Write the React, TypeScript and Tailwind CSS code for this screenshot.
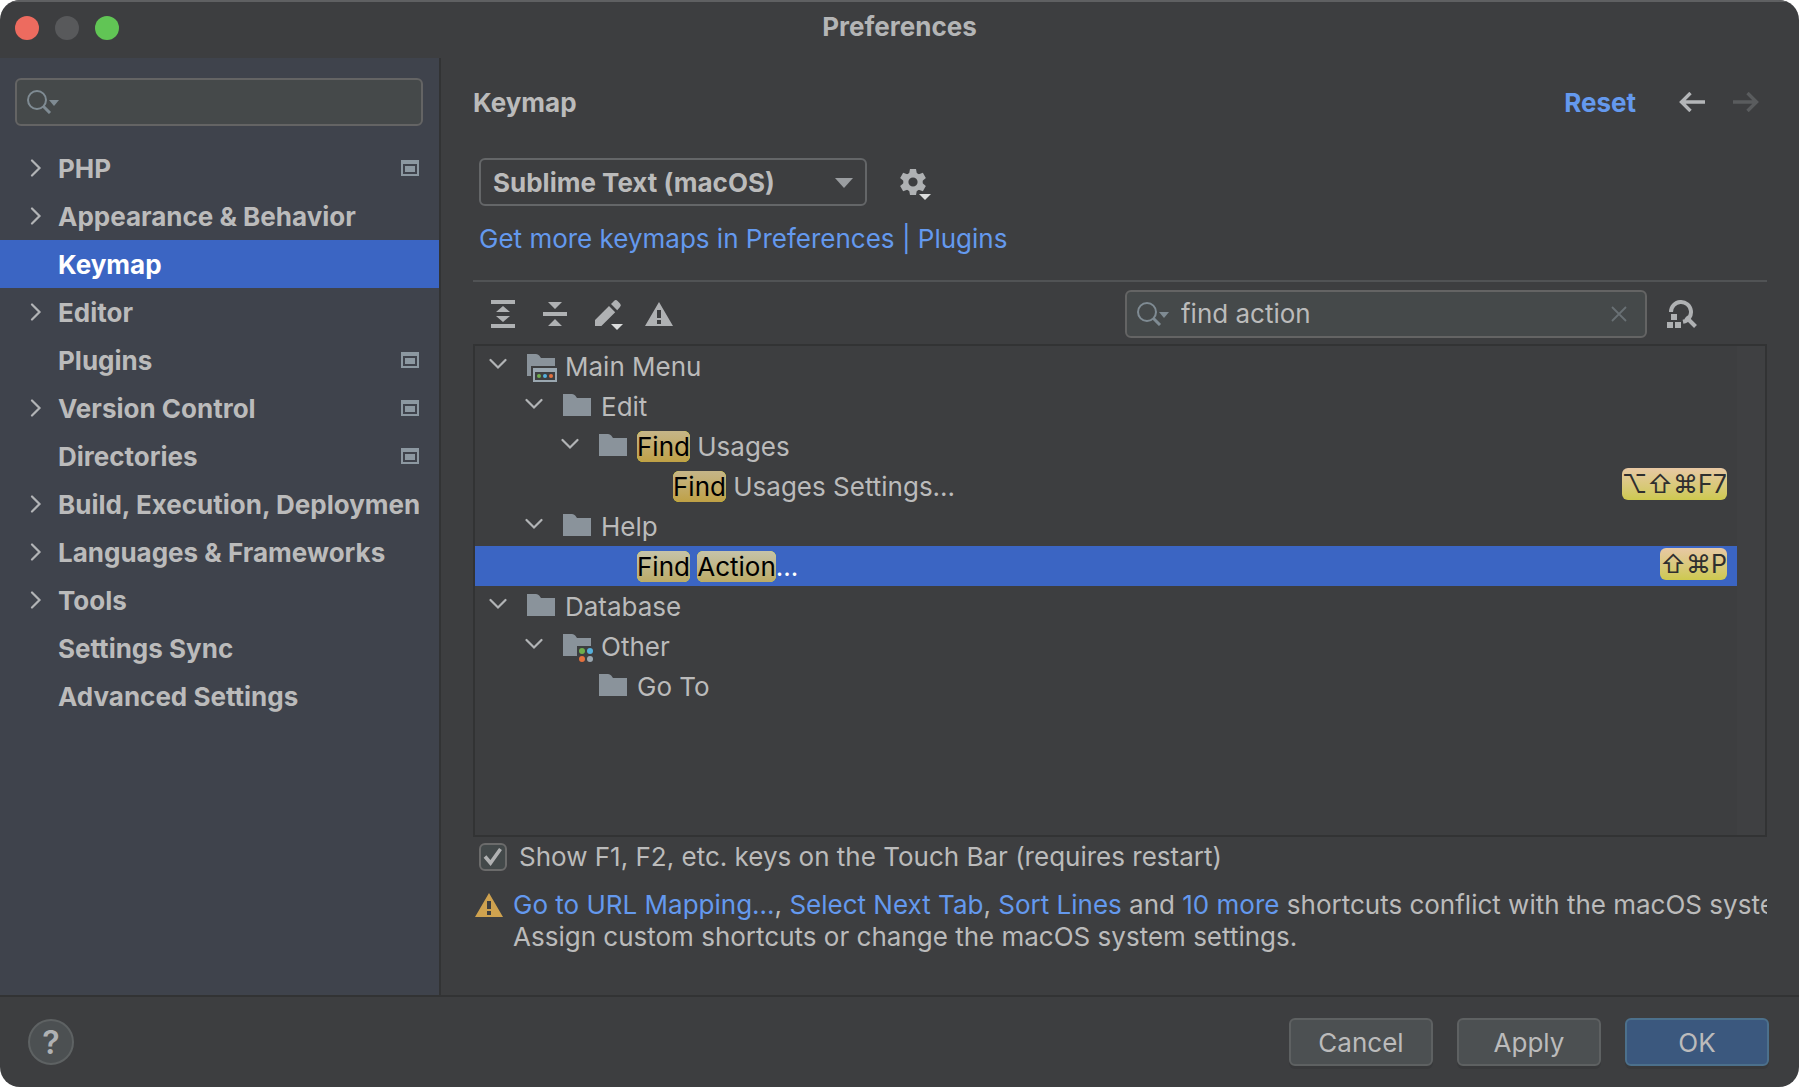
import React, { useState } from "react";
import clsx from "clsx";

type SidebarItem = {
  name: string;
  expandable?: boolean;
  projectLevel?: boolean;
};

type FolderKind = "folder" | "menu" | "group";

type TreeRow = {
  id: string;
  level: number;
  open?: boolean;
  folder?: FolderKind;
  parts: { text: string; match?: boolean }[];
  shortcut?: string;
};

const SIDEBAR_ITEMS: SidebarItem[] = [
  { name: "PHP", expandable: true, projectLevel: true },
  { name: "Appearance & Behavior", expandable: true },
  { name: "Keymap" },
  { name: "Editor", expandable: true },
  { name: "Plugins", projectLevel: true },
  { name: "Version Control", expandable: true, projectLevel: true },
  { name: "Directories", projectLevel: true },
  { name: "Build, Execution, Deployment", expandable: true },
  { name: "Languages & Frameworks", expandable: true },
  { name: "Tools", expandable: true },
  { name: "Settings Sync" },
  { name: "Advanced Settings" },
];

const TREE_ROWS: TreeRow[] = [
  { id: "main-menu", level: 0, open: true, folder: "menu", parts: [{ text: "Main Menu" }] },
  { id: "edit", level: 1, open: true, folder: "folder", parts: [{ text: "Edit" }] },
  {
    id: "find-usages",
    level: 2,
    open: true,
    folder: "folder",
    parts: [{ text: "Find", match: true }, { text: " Usages" }],
  },
  {
    id: "find-usages-settings",
    level: 3,
    parts: [{ text: "Find", match: true }, { text: " Usages Settings..." }],
    shortcut: "⌥⇧⌘F7",
  },
  { id: "help", level: 1, open: true, folder: "folder", parts: [{ text: "Help" }] },
  {
    id: "find-action",
    level: 2,
    parts: [
      { text: "Find", match: true },
      { text: " " },
      { text: "Action", match: true },
      { text: "..." },
    ],
    shortcut: "⇧⌘P",
  },
  { id: "database", level: 0, open: true, folder: "folder", parts: [{ text: "Database" }] },
  { id: "other", level: 1, open: true, folder: "group", parts: [{ text: "Other" }] },
  { id: "go-to", level: 2, folder: "folder", parts: [{ text: "Go To" }] },
];

const INDENT = ["pl-[14px]", "pl-[50px]", "pl-[86px]", "pl-[122px]"];

const SearchIcon = () => (
  <svg width="32" height="24" viewBox="0 0 32 24" fill="none" aria-hidden="true">
    <circle cx="10" cy="10" r="9" stroke="#7f8b93" strokeWidth="2" />
    <path d="M16.5 16.5 23 23" stroke="#7f8b93" strokeWidth="3" />
    <path d="M22 10h10l-5 6z" fill="#7f8b93" />
  </svg>
);

const ChevronRight = () => (
  <svg width="12" height="18" viewBox="0 0 12 18" fill="none" aria-hidden="true">
    <path
      d="m2 1.5 7.5 7.5L2 16.5"
      stroke="#b2b4b6"
      strokeWidth="2.2"
      strokeLinecap="round"
    />
  </svg>
);

const ChevronDown = () => (
  <svg width="18" height="12" viewBox="0 0 18 12" fill="none" aria-hidden="true">
    <path
      d="m1.5 2 7.5 7.5L16.5 2"
      stroke="#b2b4b6"
      strokeWidth="2.2"
      strokeLinecap="round"
    />
  </svg>
);

const ProjectIcon = () => (
  <svg width="18" height="16" viewBox="0 0 18 16" fill="#8c98a1" aria-hidden="true">
    <path fillRule="evenodd" d="M0 0h18v16H0zM2 4v10h14V4z" />
    <path d="M4 6h10v6H4z" />
  </svg>
);

const FolderIcon = ({ kind }: { kind: FolderKind }) => (
  <svg width="30" height="28" viewBox="0 0 30 28" fill="#8a939b" aria-hidden="true">
    {kind === "folder" && <path d="M0 0h9q2 0 3.2 1.6L14 4h14v18H0z" />}
    {kind === "menu" && (
      <>
        <path d="M0 0h9q2 0 3.2 1.6L14 4h14v8H4v10H0z" />
        <path fillRule="evenodd" fill="#9aa7b0" d="M6 14h24v14H6zM8 18v8h20v-8z" />
        <circle cx="12" cy="22" r="2" fill="#6fae4c" />
        <circle cx="18" cy="22" r="2" fill="#55b0dc" />
        <circle cx="24" cy="22" r="2" fill="#e4703d" />
      </>
    )}
    {kind === "group" && (
      <>
        <path d="M0 0h9q2 0 3.2 1.6L14 4h14v8H14v10H0z" />
        <circle cx="19" cy="17" r="3" fill="#6fae4c" />
        <circle cx="27" cy="17" r="3" fill="#55b0dc" />
        <circle cx="19" cy="25" r="3" fill="#e4703d" />
        <circle cx="27" cy="25" r="3" fill="#9aa7b0" />
      </>
    )}
  </svg>
);

const GearIcon = () => (
  <svg width="32" height="32" viewBox="0 0 32 32" aria-hidden="true">
    <g fill="#afb1b3">
      <path
        fillRule="evenodd"
        d="M14 4.200a9.800 9.800 0 1 1 0 19.600 9.800 9.800 0 0 1 0-19.600zm0 5.200a4.600 4.600 0 1 0 0 9.200 4.600 4.600 0 0 0 0-9.200z"
      />
      {[0, 60, 120, 180, 240, 300].map(angle => (
        <path
          key={angle}
          d="M11 .9h6l1 5.600h-8z"
          transform={`rotate(${angle} 14 14)`}
        />
      ))}
    </g>
    <path d="M20 26h12l-6 6z" fill="#dcdddd" />
  </svg>
);

const ExpandAllIcon = () => (
  <svg width="28" height="28" viewBox="0 0 28 28" fill="#afb1b3" aria-hidden="true">
    <path d="M2 0h24v4H2zM2 24h24v4H2zM14 6l7 6H7zM14 22l7-6H7z" />
  </svg>
);

const CollapseAllIcon = () => (
  <svg width="28" height="28" viewBox="0 0 28 28" fill="#afb1b3" aria-hidden="true">
    <path d="M2 12h24v4H2zM14 9l7-7H7zM14 19l7 7H7z" />
  </svg>
);

const EditIcon = () => (
  <svg
    width="28"
    height="28"
    viewBox="-2 0 28 28"
    className="overflow-visible"
    aria-hidden="true"
  >
    <path
      d="M0 20 14 6l6.200 6.200L6.400 26H0zM16 4l3-3q1.800-1.800 3.600 0L25 3.400q1.800 1.800 0 3.600l-2.800 3.200z"
      fill="#afb1b3"
    />
    <path d="M16 24h12l-6 6z" fill="#dcdddd" />
  </svg>
);

const WarningIcon = ({ color }: { color: string }) => (
  <svg width="28" height="24" viewBox="0 0 28 24" aria-hidden="true">
    <path
      fillRule="evenodd"
      d="M14 0 28 24H0zM12 8v8h4V8zm0 10v4h4v-4z"
      fill={color}
    />
  </svg>
);

const FindShortcutIcon = () => (
  <svg width="30" height="28" viewBox="0 0 30 28" fill="none" aria-hidden="true">
    <path
      d="M4 12a10 10 0 1 1 12 9.800"
      stroke="#afb1b3"
      strokeWidth="4"
    />
    <path d="m19 17 9.500 9.500" stroke="#afb1b3" strokeWidth="4" />
    <path d="M4 14h6v6H4zM0 22h6v6H0zM8 22h6v6H8z" fill="#afb1b3" />
  </svg>
);

const ArrowIcon = ({ forward }: { forward?: boolean }) => (
  <svg
    width="26"
    height="20"
    viewBox="0 0 26 20"
    fill="none"
    className={forward ? "rotate-180" : undefined}
    aria-hidden="true"
  >
    <path
      d="M26 10H3M11.500 1 2.500 10l9 9"
      stroke={forward ? "#5a5c5e" : "#b4b6b8"}
      strokeWidth="3.400"
    />
  </svg>
);

const TitleBar = () => (
  <header className="relative flex h-[58px] shrink-0 items-start border-t-2 border-[#5f6062] px-[15px] pt-[14px]">
    <div className="flex gap-4">
      <button aria-label="Close" className="size-6 rounded-full bg-[#ed6b5f]" />
      <button aria-label="Minimize" className="size-6 rounded-full bg-[#58595b]" />
      <button aria-label="Zoom" className="size-6 rounded-full bg-[#61c555]" />
    </div>
    <h1 className="pointer-events-none absolute inset-x-0 top-[9px] text-center font-bold leading-8 text-[#b4b5b6]">
      Preferences
    </h1>
  </header>
);

const Sidebar = () => {
  const [selected, setSelected] = useState("Keymap");

  return (
    <aside className="w-[441px] shrink-0 border-r-2 border-[#323334] bg-[#3f434c] pt-5">
      <label className="ml-[15px] mr-4 flex h-12 items-center rounded-md border-2 border-[#646464] bg-[#45494a] px-[10px]">
        <SearchIcon />
        <input
          type="text"
          aria-label="Search settings"
          className="ml-3 min-w-0 flex-1 bg-transparent outline-none"
        />
      </label>
      <ul className="mt-[18px] font-bold">
        {SIDEBAR_ITEMS.map(item => (
          <li key={item.name}>
            <button
              onClick={() => setSelected(item.name)}
              className={clsx("flex h-12 w-full items-center pl-[30px] pr-5 text-left", {
                "bg-[#3b65c3] text-white": selected === item.name,
              })}
            >
              <span className="w-7 shrink-0">{item.expandable && <ChevronRight />}</span>
              <span className="flex-1 overflow-hidden whitespace-nowrap pt-0.5">
                {item.name}
              </span>
              {item.projectLevel && <ProjectIcon />}
            </button>
          </li>
        ))}
      </ul>
    </aside>
  );
};

const KeymapTree = () => {
  const [selected, setSelected] = useState("find-action");

  return (
    <div className="flex min-h-[360px] flex-1 border-2 border-[#323334]">
      <ul role="tree" aria-label="Actions" className="min-w-0 flex-1">
        {TREE_ROWS.map(row => (
          <li
            key={row.id}
            role="treeitem"
            aria-selected={selected === row.id}
            onClick={() => setSelected(row.id)}
            className={clsx("flex h-10 pr-[10px]", INDENT[row.level], {
              "bg-[#3b65c3] text-white": selected === row.id,
            })}
          >
            <span className="w-[38px] shrink-0 pt-3">{row.open && <ChevronDown />}</span>
            <span className="w-[38px] shrink-0 pt-2">
              {row.folder && <FolderIcon kind={row.folder} />}
            </span>
            <span className="flex-1 whitespace-pre pt-px leading-10">
              {row.parts.map((part, i) =>
                part.match ? (
                  <mark
                    key={i}
                    className={clsx(
                      "rounded-md bg-linear-to-b text-black",
                      selected === row.id
                        ? "from-[#c5c3a9] to-[#bbab66]"
                        : "from-[#c5b588] to-[#bfa145]"
                    )}
                  >
                    {part.text}
                  </mark>
                ) : (
                  <span key={i}>{part.text}</span>
                )
              )}
            </span>
            {row.shortcut && (
              <kbd className="mt-[2px] h-8 rounded-md bg-linear-to-b from-[#e8c8a4] to-[#cdc94e] font-[Inter,sans-serif] text-[25px] leading-8 text-[#2f2f2f]">
                {row.shortcut}
              </kbd>
            )}
          </li>
        ))}
      </ul>
      <div className="w-7 bg-[#3f4042]" />
    </div>
  );
};

const KeymapPage = () => {
  const [query, setQuery] = useState("find action");
  const [showKeys, setShowKeys] = useState(true);

  return (
    <main className="flex min-w-0 flex-1 flex-col pl-8 pr-8">
      <div className="flex h-[88px] items-center">
        <h2 className="flex-1 pt-0.5 font-bold">Keymap</h2>
        <button className="pt-0.5 font-bold text-[#6499ee]">Reset</button>
        <button aria-label="Back" className="ml-[43px]">
          <ArrowIcon />
        </button>
        <button aria-label="Forward" className="ml-7 mr-2" disabled>
          <ArrowIcon forward />
        </button>
      </div>

      <div className="mt-3 flex items-center pl-[6px]">
        <div className="relative">
          <select
            aria-label="Keymap scheme"
            className="h-12 w-[388px] appearance-none rounded-md border-2 border-[#646668] bg-transparent px-3 pt-0.5 font-bold outline-none"
          >
            <option>Sublime Text (macOS)</option>
          </select>
          <svg
            width="18"
            height="10"
            viewBox="0 0 18 10"
            className="pointer-events-none absolute right-[14px] top-5"
            aria-hidden="true"
          >
            <path d="M0 0h18L9 10z" fill="#9a9da0" />
          </svg>
        </div>
        <button aria-label="Scheme actions" className="ml-8 pt-1">
          <GearIcon />
        </button>
      </div>
      <div className="mt-[17px] pl-[6px] leading-8 text-[#6499ee]">
        <a href="#plugins">Get more keymaps in Preferences | Plugins</a>
      </div>

      <div className="mt-[25px] flex h-16 items-center border-t-2 border-[#515355] pl-4 pt-0.5">
        <div className="flex flex-1 items-center gap-6">
          <button aria-label="Expand all">
            <ExpandAllIcon />
          </button>
          <button aria-label="Collapse all">
            <CollapseAllIcon />
          </button>
          <button aria-label="Edit shortcut">
            <EditIcon />
          </button>
          <button aria-label="Show conflicts">
            <WarningIcon color="#afb1b3" />
          </button>
        </div>
        <label className="flex h-12 w-[522px] items-center rounded-md border-2 border-[#646464] bg-[#45494a] px-[10px]">
          <SearchIcon />
          <input
            type="text"
            aria-label="Search actions"
            value={query}
            onChange={e => setQuery(e.target.value)}
            className="ml-3 min-w-0 flex-1 bg-transparent outline-none"
          />
          <button aria-label="Clear" onClick={() => setQuery("")} className="mr-2">
            <svg width="16" height="16" viewBox="0 0 16 16" aria-hidden="true">
              <path d="m1 1 14 14M15 1 1 15" stroke="#697074" strokeWidth="1.800" />
            </svg>
          </button>
        </label>
        <button aria-label="Find actions by shortcut" className="ml-5 mr-[70px]">
          <FindShortcutIcon />
        </button>
      </div>

      <KeymapTree />

      <label className="mt-[6px] flex items-center gap-3 pl-[6px] leading-7">
        <span className="relative size-7">
          <input
            type="checkbox"
            checked={showKeys}
            onChange={e => setShowKeys(e.target.checked)}
            className="block size-7 appearance-none rounded-md border-2 border-[#6b6b6b] bg-[#43494a]"
          />
          {showKeys && (
            <svg
              width="28"
              height="28"
              viewBox="0 0 28 28"
              fill="none"
              className="pointer-events-none absolute inset-0"
              aria-hidden="true"
            >
              <path d="m6 13.500 5.500 6.500L21.500 6" stroke="#b0b1b2" strokeWidth="3.600" />
            </svg>
          )}
        </span>
        Show F1, F2, etc. keys on the Touch Bar (requires restart)
      </label>

      <div className="mb-[42px] mt-[18px] flex gap-[10px] pl-[2px]">
        <div className="shrink-0 pt-1">
          <WarningIcon color="#cfa24f" />
        </div>
        <p className="min-w-0 flex-1 overflow-hidden whitespace-nowrap leading-8">
          <a href="#url-mapping" className="text-[#6499ee]">Go to URL Mapping...</a>,{" "}
          <a href="#next-tab" className="text-[#6499ee]">Select Next Tab</a>,{" "}
          <a href="#sort-lines" className="text-[#6499ee]">Sort Lines</a> and{" "}
          <a href="#more" className="text-[#6499ee]">10 more</a> shortcuts conflict with
          the macOS system shortcuts.
          <br />
          Assign custom shortcuts or change the macOS system settings.
        </p>
      </div>
    </main>
  );
};

const Footer = () => (
  <footer className="flex h-[92px] shrink-0 items-center border-t-2 border-[#323334] pl-7 pr-[30px]">
    <button
      aria-label="Help"
      className="size-[46px] rounded-full border-2 border-[#5e6263] bg-[#4c5052] pt-0.5 text-[32px] font-semibold leading-10 text-[#afb1b3]"
    >
      ?
    </button>
    <div className="ml-auto flex gap-6">
      <button className="h-12 w-36 rounded-md border-2 border-[#5e6162] bg-[#4c5052] pt-0.5 shadow-[0_3px_0_#38393b]">
        Cancel
      </button>
      <button className="h-12 w-36 rounded-md border-2 border-[#5e6162] bg-[#4c5052] pt-0.5 shadow-[0_3px_0_#38393b]">
        Apply
      </button>
      <button className="h-12 w-36 rounded-md border-2 border-[#4c708c] bg-[#3b587e] pt-0.5 shadow-[0_3px_0_#38393b]">
        OK
      </button>
    </div>
  </footer>
);

const App = () => (
  <div className="bg-white">
    <div className="flex min-h-screen flex-col overflow-hidden rounded-[20px] bg-[#3d3e40] font-[Inter,sans-serif] text-[26px] leading-8 text-[#bbbbbb]">
      <TitleBar />
      <div className="flex flex-1">
        <Sidebar />
        <KeymapPage />
      </div>
      <Footer />
    </div>
  </div>
);

export default App;
